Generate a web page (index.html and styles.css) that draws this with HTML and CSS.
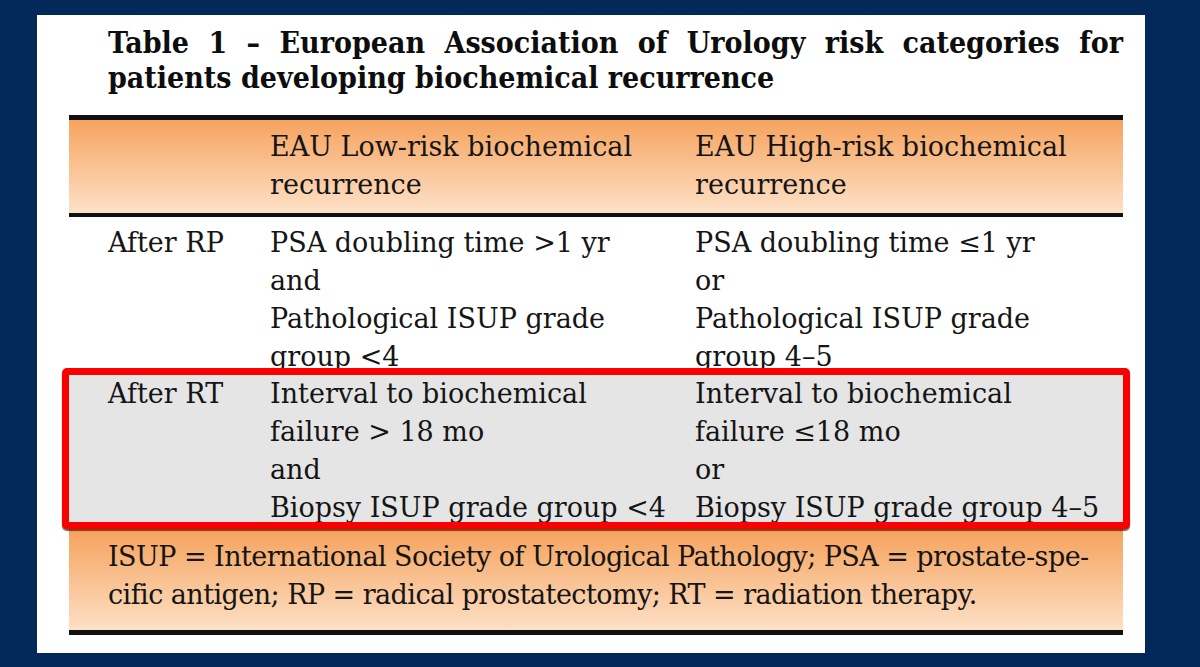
FILE: index.html
```html
<!DOCTYPE html>
<html lang="en">
<head>
<meta charset="utf-8">
<title>Table 1 – EAU risk categories</title>
<link rel="stylesheet" href="styles.css">
</head>
<body>
<div class="panel">
  <h1 class="title">Table 1 – European Association of Urology risk categories for patients developing biochemical recurrence</h1>
  <div class="table">
    <div class="row head">
      <div class="cell first"></div>
      <div class="cell">EAU Low-risk biochemical<br>recurrence</div>
      <div class="cell">EAU High-risk biochemical<br>recurrence</div>
    </div>
    <div class="row rp">
      <div class="cell first">After RP</div>
      <div class="cell">PSA doubling time &gt;1 yr<br>and<br>Pathological ISUP grade<br>group &lt;4</div>
      <div class="cell">PSA doubling time ≤1 yr<br>or<br>Pathological ISUP grade<br>group 4–5</div>
    </div>
    <div class="highlight">
      <div class="row rt">
        <div class="cell first">After RT</div>
        <div class="cell">Interval to biochemical<br>failure &gt; 18 mo<br>and<br>Biopsy ISUP grade group &lt;4</div>
        <div class="cell">Interval to biochemical<br>failure ≤18 mo<br>or<br>Biopsy ISUP grade group 4–5</div>
      </div>
    </div>
    <div class="foot">
      <p class="foot-line">ISUP = International Society of Urological Pathology; PSA = prostate-spe-</p>
      <p class="foot-line">cific antigen; RP = radical prostatectomy; RT = radiation therapy.</p>
    </div>
  </div>
</div>
</body>
</html>
```
FILE: styles.css
```css
html, body {
  margin: 0;
  padding: 0;
}
body {
  background: #03295b;
  width: 1200px;
  height: 667px;
  overflow: hidden;
}
.panel {
  margin: 15px 0 0 37px;
  width: 1108px;
  height: 638px;
  background: #ffffff;
  box-sizing: border-box;
  padding: 10px 22px 0 32px;
  color: #151515;
  font-family: "DejaVu Serif", serif;
  overflow: hidden;
}
.title {
  margin: 0 0 20px 0;
  padding-left: 39px;
  font-family: "DejaVu Serif Condensed", "DejaVu Serif", serif;
  font-stretch: condensed;
  font-weight: bold;
  font-size: 30px;
  line-height: 35px;
  text-align: justify;
  color: #0d0d0d;
}
.table {
  width: 1054px;
  font-size: 27px;
  line-height: 38px;
}
.row {
  display: grid;
  grid-template-columns: 201px 425px 1fr;
}
.cell.first {
  padding-left: 39px;
}
.head {
  border-top: 5px solid #111;
  border-bottom: 4px solid #111;
  padding: 8px 0 9px;
  background: linear-gradient(to bottom, #f6a35e, #fde1c8);
}
.rp {
  padding: 7px 0 0;
  height: 152px;
}
.highlight {
  position: relative;
  margin: -8px -7px 0;
  border: 7px solid #fa0000;
  border-radius: 5px;
  background: #e5e5e5;
  box-shadow: 0 2px 1px rgba(90, 10, 0, 0.7);
}
.rt {
  height: 147px;
  overflow: hidden;
}
.foot {
  padding: 9px 0 16px 39px;
  background: linear-gradient(to bottom, #f5a25c, #fde0c6);
  border-bottom: 5px solid #111;
}
.foot-line {
  margin: 0;
  white-space: nowrap;
  letter-spacing: -0.55px;
}
```
